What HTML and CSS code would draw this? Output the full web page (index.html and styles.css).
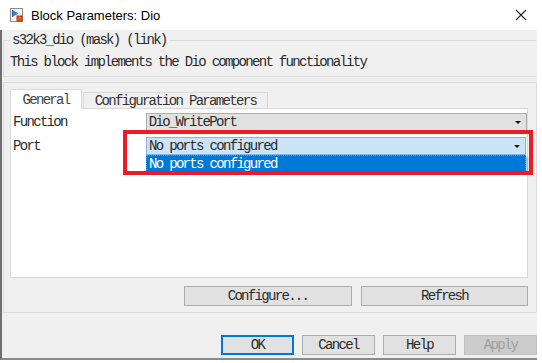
FILE: index.html
```html
<html lang="en">
<head>
    <meta charset="UTF-8">
    <title>Block Parameters: Dio</title>
    <link rel="stylesheet" href="styles.css">
</head>
<body>

    <div class="titlebar">
        <svg class="app-icon" width="14" height="15" viewBox="0 0 14 15">
            <rect x="0.5" y="0.5" width="12" height="13" fill="#f6f6f6" stroke="#8a8a8a"/>
            <path d="M3 2.5 L3 8.5 L8.5 5.5 Z" fill="#2f86d8"/>
            <rect x="2" y="2" width="1" height="7" fill="#1c5fa8"/>
            <rect x="7" y="8" width="5" height="5" fill="#ee5a1c" stroke="#b8350c" stroke-width="1"/>
        </svg>
        <span class="title-text">Block Parameters: Dio</span>
        <svg class="close-icon" width="12" height="12" viewBox="0 0 12 12">
            <path d="M1 1 L11 11 M11 1 L1 11" stroke="#222" stroke-width="1.1" fill="none"/>
        </svg>
    </div>

    <div class="dialog">
        <fieldset class="mask-box">
            <legend class="mono">s32k3_dio (mask) (link)</legend>
            <p class="mono description">This block implements the Dio component functionality</p>
        </fieldset>

        <div class="param-box">
            <div class="tabs">
                <div class="tab tab-active mono">General</div>
                <div class="tab mono">Configuration Parameters</div>
            </div>
            <div class="tab-panel">
                <div class="param-row">
                    <span class="mono param-label">Function</span>
                    <div class="combo mono">
                        <span>Dio_WritePort</span>
                        <span class="arrow"></span>
                    </div>
                </div>
                <div class="param-row">
                    <span class="mono param-label">Port</span>
                    <div class="combo combo-open mono">
                        <span>No ports configured</span>
                        <span class="arrow"></span>
                        <div class="combo-list">No ports configured</div>
                    </div>
                </div>
                <!-- красная рамка-выделение -->
                <div class="highlight"></div>
            </div>
            <div class="panel-buttons">
                <button class="btn btn-wide mono">Configure...</button>
                <button class="btn btn-wide mono">Refresh</button>
            </div>
        </div>

        <div class="dialog-buttons">
            <button class="btn btn-ok mono">OK</button>
            <button class="btn mono">Cancel</button>
            <button class="btn mono">Help</button>
            <button class="btn btn-disabled mono" disabled>Apply</button>
        </div>
    </div>

</body>
</html>
```

FILE: styles.css
```css
body {
    margin: 0;
    width: 542px;
    height: 363px;
    background-color: #fff;
    overflow: hidden;
}

.mono {
    font-family: 'Liberation Mono', monospace;
    font-size: 14px;
    letter-spacing: -1.68px;
    color: #2b2b2b;
    line-height: 14px;
}

/* Заголовок окна */
.titlebar {
    height: 30px;
    display: flex;
    align-items: center;
    padding-left: 10px;
    box-sizing: border-box;
    background-color: #fff;
}
.app-icon {
    margin-top: 1px;
}
.title-text {
    font-family: 'Liberation Sans', Arial, sans-serif;
    font-size: 13px;
    color: #000;
    margin-left: 7px;
}
.close-icon {
    margin-left: auto;
    margin-right: 15px;
}

/* Тело диалога */
.dialog {
    width: 537px;
    height: 330px;
    box-sizing: border-box;
    background-color: #f0f0f0;
    border-left: 2px solid #707070;
    border-bottom: 2px solid #8a8a8a;
    padding-top: 3px;
    display: flex;
    flex-direction: column;
}

.mask-box {
    margin: 0 0 0 1px;
    padding: 0 0 7px 6px;
    border: 1px solid #dcdcdc;
    border-right: none;
    min-width: 0;
}
.mask-box legend {
    padding: 0 2px;
}
.description {
    margin: 8px 0 0 0;
}

.param-box {
    margin: 5px 0 0 1px;
    padding: 6px 8px 6px 6px;
    border: 1px solid #dcdcdc;
}

.tabs {
    display: flex;
    align-items: flex-end;
}
.tab {
    height: 16px;
    box-sizing: border-box;
    padding: 0 9px;
    border: 1px solid #d9d9d9;
    border-bottom: none;
    background-color: #f0f0f0;
    display: flex;
    align-items: center;
    justify-content: center;
    color: #333;
}
.tab-active {
    width: 72px;
    height: 20px;
    background-color: #fff;
    margin-bottom: -1px;
    position: relative;
    z-index: 1;
    margin-right: 1px;
    color: #444;
}
.tab + .tab {
    width: 185px;
}

.tab-panel {
    position: relative;
    height: 170px;
    box-sizing: border-box;
    background-color: #fff;
    border: 1px solid #d9d9d9;
    padding: 4px 0 0 1px;
    display: flex;
    flex-direction: column;
    gap: 6px;
}

.param-row {
    display: flex;
    align-items: center;
}
.param-label {
    width: 133px;
    padding-left: 1px;
}
.combo {
    position: relative;
    width: 382px;
    height: 18px;
    box-sizing: border-box;
    border: 1px solid #adadad;
    background-color: #e1e1e1;
    display: flex;
    align-items: center;
    padding-left: 2px;
}
.combo-open {
    background-color: #cce4f7;
    border-color: #7eb4ea;
    width: 380px;
}
.arrow {
    margin-left: auto;
    margin-right: 5px;
    width: 0;
    height: 0;
    border-left: 3px solid transparent;
    border-right: 3px solid transparent;
    border-top: 3px solid #111;
}
.combo-list {
    position: absolute;
    left: -1px;
    right: -1px;
    top: 17px;
    height: 17px;
    box-sizing: border-box;
    background-color: #0078d7;
    color: #fff;
    border: 1px dotted #8a8a8a;
    padding-left: 2px;
    display: flex;
    align-items: center;
    box-shadow: 2px 2px 2px rgba(0, 0, 0, 0.25);
    z-index: 2;
}

.highlight {
    position: absolute;
    left: 112px;
    top: 21px;
    width: 410px;
    height: 45px;
    box-sizing: border-box;
    border: 4px solid #ec1c24;
    z-index: 3;
}

/* Кнопки */
.btn {
    height: 20px;
    padding: 0;
    border: 1px solid #adadad;
    background-color: #e1e1e1;
    text-align: center;
}
.panel-buttons {
    display: flex;
    justify-content: flex-end;
    gap: 9px;
    margin-top: 8px;
}
.btn-wide {
    width: 168px;
}
.btn-wide + .btn-wide {
    width: 167px;
}

.dialog-buttons {
    margin-top: 22px;
    display: flex;
    justify-content: flex-end;
    gap: 8px;
}
.dialog-buttons .btn {
    width: 73px;
}
.btn-ok {
    border-color: #0078d7;
    box-shadow: inset 0 0 0 1px #0078d7;
}
.btn-disabled {
    background-color: #cccccc;
    border-color: #bfbfbf;
    color: #a0a0a0;
}
```
